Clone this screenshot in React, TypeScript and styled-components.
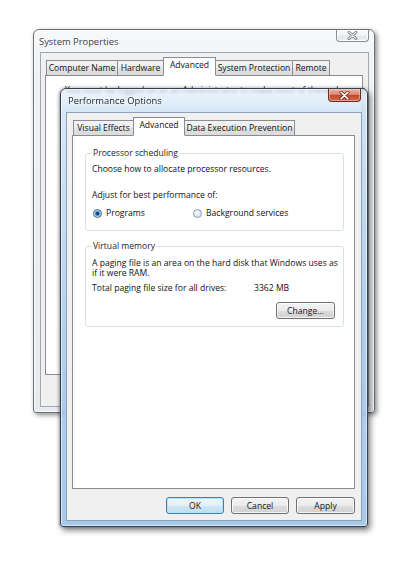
import React from 'react';
import styled, { createGlobalStyle, css } from 'styled-components';

const GlobalStyle = createGlobalStyle`
  html, body { margin: 0; padding: 0; background: #ffffff; }
  #root { width: 420px; height: 571px; }
`;

const Desktop = styled.div`
  position: relative;
  width: 420px;
  height: 571px;
  overflow: hidden;
  background: #ffffff;
  font-family: "Open Sans", "Noto Sans", sans-serif;
  font-size: 8.6px;
  color: #1b1b1b;
`;

const Window = styled.div<{ $x: number; $y: number; $w: number; $h: number; $active?: boolean }>`
  position: absolute;
  left: ${(p) => p.$x}px;
  top: ${(p) => p.$y}px;
  width: ${(p) => p.$w}px;
  height: ${(p) => p.$h}px;
  box-sizing: border-box;
  display: flex;
  flex-direction: column;
  border-radius: 6px 6px 3px 3px;
  ${(p) =>
    p.$active
      ? css`
          border: 1px solid #2f4256;
          background: linear-gradient(
            180deg,
            rgba(232, 242, 252, 0.7) 0px,
            rgba(204, 224, 244, 0.78) 22px,
            rgba(170, 202, 234, 0.88) 55%,
            rgba(160, 196, 232, 0.92) 100%
          );
          backdrop-filter: blur(1.6px);
          box-shadow: 2px 3px 6px rgba(0, 0, 0, 0.55), -1px 0 3px rgba(0, 0, 0, 0.3),
            inset 0 0 0 1px rgba(255, 255, 255, 0.55);
        `
      : css`
          border: 1px solid #6d7176;
          background: linear-gradient(180deg, #f8f9fa 0px, #f0f2f4 30px, #e7eaee 100%);
          box-shadow: 2px 2px 5px rgba(0, 0, 0, 0.45), inset 0 0 0 1px rgba(255, 255, 255, 0.8);
        `}
`;

const TitleBar = styled.div<{ $h: number; $pad: number; $active?: boolean }>`
  height: ${(p) => p.$h}px;
  flex: none;
  display: flex;
  align-items: flex-start;
  justify-content: space-between;
  padding-left: ${(p) => p.$pad}px;
  padding-right: ${(p) => (p.$active ? 6 : 5)}px;
`;

const Title = styled.span<{ $active?: boolean }>`
  align-self: center;
  font-size: 9.4px;
  color: ${(p) => (p.$active ? '#17222e' : '#3a3d40')};
  text-shadow: 0 0 4px rgba(255, 255, 255, 0.95), 0 0 2px rgba(255, 255, 255, 0.9);
  white-space: nowrap;
`;

const CloseButton = styled.div<{ $active?: boolean }>`
  width: 33px;
  height: ${(p) => (p.$active ? 13 : 12)}px;
  box-sizing: border-box;
  display: flex;
  align-items: center;
  justify-content: center;
  border-radius: 0 0 4px 4px;
  ${(p) =>
    p.$active
      ? css`
          border: 1px solid #6e2a1f;
          border-top: none;
          background: linear-gradient(180deg, #eab3a3 0%, #dc8c76 45%, #c7442c 50%, #cf6a48 100%);
          box-shadow: inset 0 0 0 1px rgba(255, 220, 210, 0.5);
        `
      : css`
          border: 1px solid #8a8e93;
          border-top: none;
          background: linear-gradient(180deg, #fbfcfd 0%, #eef1f4 50%, #e2e6ea 51%, #eceff2 100%);
          box-shadow: inset 0 0 0 1px rgba(255, 255, 255, 0.8);
        `}
`;

const Client = styled.div<{ $active?: boolean }>`
  flex: 1;
  min-height: 0;
  display: flex;
  flex-direction: column;
  background: #f0f0f0;
  border: 1px solid ${(p) => (p.$active ? '#8ba2ba' : '#a3a8ad')};
`;

const FrontClient = styled(Client)`
  margin: 0 5px 5px 5px;
  padding: 4px 6px 6px 5px;
`;

const BackClient = styled(Client)`
  margin: 0 5px 5px 6px;
  padding: 4px 5px 0 4px;
`;

const TabStrip = styled.div`
  display: flex;
  align-items: flex-end;
  padding-left: 2px;
  margin-bottom: -1px;
  position: relative;
  z-index: 1;
`;

const Tab = styled.div<{ $w: number; $selected?: boolean }>`
  width: ${(p) => p.$w}px;
  box-sizing: border-box;
  display: flex;
  align-items: center;
  justify-content: center;
  white-space: nowrap;
  border: 1px solid #898c95;
  margin-left: -1px;
  color: #111;
  ${(p) =>
    p.$selected
      ? css`
          height: 19px;
          padding-bottom: 3px;
          border-bottom-color: #ffffff;
          background: #ffffff;
          position: relative;
          z-index: 2;
        `
      : css`
          height: 16px;
          background: linear-gradient(180deg, #f4f4f4 0%, #ececec 50%, #e2e2e2 51%, #dadada 100%);
        `}
`;

const TabPanel = styled.div<{ $pad: string }>`
  flex: 1;
  min-height: 0;
  background: #ffffff;
  border: 1px solid #898c95;
  padding: ${(p) => p.$pad};
  display: flex;
  flex-direction: column;
`;

const BackNote = styled.div`
  line-height: 11px;
  white-space: nowrap;
  color: #111;
`;

const Group = styled.fieldset<{ $gap?: number }>`
  margin: 0 0 ${(p) => p.$gap ?? 0}px 0;
  padding: 0 8px 0 6px;
  border: 1px solid #d5dfe5;
  border-radius: 3px;
  display: flex;
  flex-direction: column;
  min-width: 0;
`;

const Legend = styled.legend`
  padding: 0 1px;
  line-height: 10px;
  color: #1d1d1d;
`;

const Line = styled.div<{ $top: number }>`
  margin-top: ${(p) => p.$top}px;
  line-height: 10px;
  white-space: nowrap;
  color: #111;
`;

const RadioRow = styled.div`
  margin-top: 7px;
  margin-bottom: 11px;
  display: grid;
  grid-template-columns: 100px auto;
  height: 12px;
  align-items: center;
`;

const RadioOption = styled.label`
  display: flex;
  align-items: center;
  gap: 4px;
  padding-left: 1px;
  color: #111;
  white-space: nowrap;
`;

const RadioDot = styled.span<{ $checked?: boolean }>`
  width: 9px;
  height: 9px;
  box-sizing: border-box;
  border-radius: 50%;
  flex: none;
  ${(p) =>
    p.$checked
      ? css`
          border: 1px solid #3b6790;
          background: radial-gradient(circle, #163f66 0, #1f5a8f 1.6px, #7fb2dc 2.4px, #d7e8f6 3.4px);
        `
      : css`
          border: 1px solid #8b99a7;
          background: radial-gradient(circle at 40% 40%, #f6f9fc 0, #dce7f1 60%, #c4d4e3 100%);
        `}
`;

const SizeRow = styled.div`
  margin-top: 5px;
  display: grid;
  grid-template-columns: 162px auto;
  line-height: 10px;
  color: #111;
  white-space: nowrap;
`;

const ButtonRow = styled.div<{ $top: number; $bottom?: number }>`
  display: flex;
  justify-content: flex-end;
  gap: 7px;
  margin-top: ${(p) => p.$top}px;
  margin-bottom: ${(p) => p.$bottom ?? 0}px;
`;

const PushButton = styled.button<{ $w: number; $default?: boolean }>`
  width: ${(p) => p.$w}px;
  height: 17px;
  box-sizing: border-box;
  padding: 0;
  margin: 0;
  font: inherit;
  color: #161616;
  border-radius: 3px;
  border: 1px solid ${(p) => (p.$default ? '#3c7fb1' : '#707070')};
  background: ${(p) =>
    p.$default
      ? 'linear-gradient(180deg, #eef7fc 0%, #e1f0f9 50%, #cfe7f5 51%, #c0dff1 100%)'
      : 'linear-gradient(180deg, #f3f3f3 0%, #ebebeb 50%, #dddddd 51%, #d1d1d1 100%)'};
  box-shadow: inset 0 0 0 1px ${(p) => (p.$default ? 'rgba(180, 225, 250, 0.9)' : 'rgba(255, 255, 255, 0.75)')};
`;

const GroupFooter = styled.div`
  display: flex;
  justify-content: flex-end;
  margin-top: 9px;
  margin-bottom: 7px;
`;

const CloseGlyph: React.FC<{ active?: boolean }> = ({ active }) => (
  <svg width="11" height="9" viewBox="0 0 11 9">
    <path
      d="M2 1.2 L9 7.8 M9 1.2 L2 7.8"
      stroke={active ? '#5b1a10' : '#7b8086'}
      strokeWidth={active ? 3 : 2.8}
      strokeLinecap="round"
      fill="none"
    />
    <path
      d="M2 1.2 L9 7.8 M9 1.2 L2 7.8"
      stroke={active ? '#ffffff' : '#f4f6f8'}
      strokeWidth={active ? 1.6 : 1.1}
      strokeLinecap="round"
      fill="none"
    />
  </svg>
);

export default function App() {
  return (
    <>
      <GlobalStyle />
      <Desktop>
        <Window $x={33} $y={29} $w={342} $h={384}>
          <TitleBar $h={22} $pad={5}>
            <Title>System Properties</Title>
            <CloseButton>
              <CloseGlyph />
            </CloseButton>
          </TitleBar>
          <BackClient>
            <TabStrip>
              <Tab $w={72}>Computer Name</Tab>
              <Tab $w={47}>Hardware</Tab>
              <Tab $w={53} $selected>
                Advanced
              </Tab>
              <Tab $w={78}>System Protection</Tab>
              <Tab $w={38}>Remote</Tab>
            </TabStrip>
            <TabPanel $pad="9px 7px 9px 19px">
              <BackNote>You must be logged on as an Administrator to make most of these changes.</BackNote>
            </TabPanel>
            <ButtonRow $top={8} $bottom={6}>
              <PushButton $w={58} $default>OK</PushButton>
              <PushButton $w={58}>Cancel</PushButton>
              <PushButton $w={58}>Apply</PushButton>
            </ButtonRow>
          </BackClient>
        </Window>

        <Window $x={60} $y={88} $w={308} $h={439} $active>
          <TitleBar $h={23} $pad={7} $active>
            <Title $active>Performance Options</Title>
            <CloseButton $active>
              <CloseGlyph active />
            </CloseButton>
          </TitleBar>
          <FrontClient $active>
            <TabStrip>
              <Tab $w={61}>Visual Effects</Tab>
              <Tab $w={52} $selected>
                Advanced
              </Tab>
              <Tab $w={111}>Data Execution Prevention</Tab>
            </TabStrip>
            <TabPanel $pad="12px 10px 0 12px">
              <Group $gap={10}>
                <Legend>Processor scheduling</Legend>
                <Line $top={6}>Choose how to allocate processor resources.</Line>
                <Line $top={16}>Adjust for best performance of:</Line>
                <RadioRow>
                  <RadioOption>
                    <RadioDot $checked />
                    Programs
                  </RadioOption>
                  <RadioOption>
                    <RadioDot />
                    Background services
                  </RadioOption>
                </RadioRow>
              </Group>
              <Group>
                <Legend>Virtual memory</Legend>
                <Line $top={7}>A paging file is an area on the hard disk that Windows uses as</Line>
                <Line $top={0}>if it were RAM.</Line>
                <SizeRow>
                  <span>Total paging file size for all drives:</span>
                  <span>3362 MB</span>
                </SizeRow>
                <GroupFooter>
                  <PushButton $w={59}>Change...</PushButton>
                </GroupFooter>
              </Group>
            </TabPanel>
            <ButtonRow $top={8}>
              <PushButton $w={58} $default>
                OK
              </PushButton>
              <PushButton $w={58}>Cancel</PushButton>
              <PushButton $w={59}>Apply</PushButton>
            </ButtonRow>
          </FrontClient>
        </Window>
      </Desktop>
    </>
  );
}
